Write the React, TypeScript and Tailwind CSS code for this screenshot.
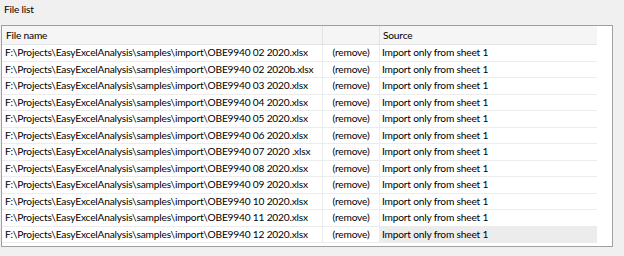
const FILES = [
  "OBE9940 02 2020.xlsx",
  "OBE9940 02 2020b.xlsx",
  "OBE9940 03 2020.xlsx",
  "OBE9940 04 2020.xlsx",
  "OBE9940 05 2020.xlsx",
  "OBE9940 06 2020.xlsx",
  "OBE9940 07 2020 .xlsx",
  "OBE9940 08 2020.xlsx",
  "OBE9940 09 2020.xlsx",
  "OBE9940 10 2020.xlsx",
  "OBE9940 11 2020.xlsx",
  "OBE9940 12 2020.xlsx",
];

const BASE = "F:\\Projects\\EasyExcelAnalysis\\samples\\import\\";

export default function App() {
  return (
    <div
      className="w-[624px] h-[256px] bg-[#f0f0f0] text-[10.2px] tracking-[-0.2px] text-black overflow-hidden"
      style={{ fontFamily: 'Lato, "Noto Sans", sans-serif' }}
    >
      <div className="h-[25px] pl-[4px] pt-[1px] leading-[16px]">File list</div>

      <div className="ml-[1px] w-[612px] h-[222px] border border-[#a0a0a0] bg-white flex flex-col">
        {/* header */}
        <div className="flex h-[19px] leading-[18px] shrink-0">
          <div className="w-[321px] bg-[#f5f5f5] border-r border-b border-[#e3e3e3] pl-[4px]">File name</div>
          <div className="w-[57px] bg-[#f5f5f5] border-r border-b border-[#e3e3e3]" />
          <div className="w-[217px] bg-[#f5f5f5] border-b border-[#e3e3e3] pl-[3px]">Source</div>
          <div className="flex-1 bg-white" />
        </div>

        {FILES.map((f, i) => {
          const last = i === FILES.length - 1;
          return (
            <div key={f} className="flex h-[16.5px] leading-[15px] shrink-0">
              <div className="w-[321px] border-r border-b border-[#ececec] pl-[3px] whitespace-nowrap overflow-hidden">
                {BASE + f}
              </div>
              <div className="w-[57px] border-r border-b border-[#ececec] text-center whitespace-nowrap">
                (remove)
              </div>
              <div
                className={
                  "w-[217px] border-b border-[#ececec] pl-[2px] whitespace-nowrap " +
                  (last ? "bg-[#ececec]" : "bg-white")
                }
              >
                Import only from sheet 1
              </div>
              <div className="flex-1 bg-white" />
            </div>
          );
        })}
      </div>
    </div>
  );
}
